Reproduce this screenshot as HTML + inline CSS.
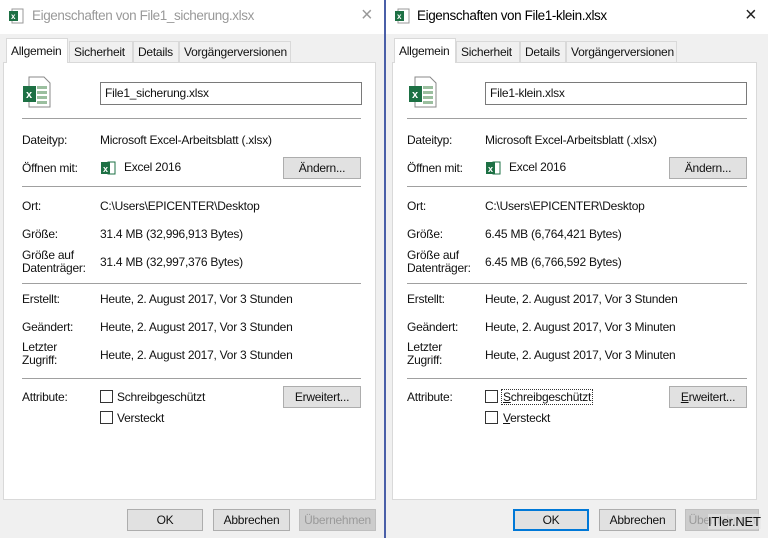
<!DOCTYPE html>
<html><head><meta charset="utf-8"><style>
*{margin:0;padding:0;box-sizing:border-box}
body{width:768px;height:538px;background:#f0f0f0;font-family:"Liberation Sans",sans-serif;font-size:12px;letter-spacing:-0.25px;color:#111;position:relative;overflow:hidden}
.w{position:absolute;top:0;height:538px;width:384px;background:#f0f0f0}
.a{position:absolute;white-space:nowrap}
.tb{position:absolute;left:0;top:0;width:100%;height:34px;background:#fff}
.panel{position:absolute;top:62px;height:438px;background:#fff;border:1px solid #d9d9d9}
.tab{position:absolute;top:41px;height:21px;border:1px solid #d9d9d9;border-bottom:none;background:#f0f0f0;padding:3px 4px 0;font-size:12px}
.tab.s{top:38px;height:25px;background:#fff;padding-top:5px;z-index:2}
.sep{position:absolute;height:1px;background:#a0a0a0}
.btn{position:absolute;height:22px;background:#e1e1e1;border:1px solid #adadad;text-align:center;line-height:20px}
.cb{position:absolute;width:13px;height:13px;border:1px solid #333;background:#fff}
.inp{position:absolute;height:23px;border:1px solid #7a7a7a;background:#fff;padding:3px 4px}
</style></head><body>

<div class="w" style="left:0">
<div class="tb"></div>
<svg class="a" style="left:8px;top:8px" width="16" height="16"><rect x="4" y="1" width="11" height="14" fill="#fff" stroke="#999"/><rect x="1" y="3" width="9" height="10" fill="#1d7044"/><text x="3" y="11" font-size="8" fill="#fff" font-family="Liberation Sans" font-weight="bold">x</text></svg>
<div class="a" style="left:32px;top:8px;font-size:13.5px;color:#999;letter-spacing:-0.4px">Eigenschaften von File1_sicherung.xlsx</div>
<div class="a" style="left:361px;top:4px;font-size:20px;color:#999">×</div>
<div class="panel" style="left:3px;width:373px"></div>
<div class="tab s" style="left:6px;width:62px">Allgemein</div>
<div class="tab" style="left:69px;width:64px">Sicherheit</div>
<div class="tab" style="left:133px;width:46px">Details</div>
<div class="tab" style="left:179px;width:112px">Vorgängerversionen</div>
<svg class="a" style="left:22px;top:76px" width="30" height="32"><path d="M7 1h15l6 6v24H7z" fill="#fff" stroke="#888"/><g fill="#9bbf9f"><rect x="15" y="10" width="10" height="3"/><rect x="15" y="15" width="10" height="3"/><rect x="15" y="20" width="10" height="3"/><rect x="15" y="25" width="10" height="3"/></g><rect x="1" y="10" width="13" height="16" fill="#1d7044"/><text x="4" y="22" font-size="11" fill="#fff" font-family="Liberation Sans" font-weight="bold">x</text></svg>
<div class="inp" style="left:100px;top:82px;width:262px">File1_sicherung.xlsx</div>
<div class="sep" style="left:22px;top:118px;width:339px"></div>
<div class="a" style="left:22px;top:133px">Dateityp:</div><div class="a" style="left:100px;top:133px">Microsoft Excel-Arbeitsblatt (.xlsx)</div>
<div class="a" style="left:22px;top:161px">Öffnen mit:</div>
<svg class="a" style="left:100px;top:160px" width="16" height="16"><rect x="8" y="2" width="7" height="12" fill="#fff" stroke="#1d7044"/><rect x="1" y="2" width="9" height="12" fill="#1d7044"/><text x="3" y="12" font-size="9" fill="#fff" font-weight="bold" font-family="Liberation Sans">x</text></svg>
<div class="a" style="left:124px;top:160px">Excel 2016</div>
<div class="btn" style="left:283px;top:157px;width:78px">Ändern...</div>
<div class="sep" style="left:22px;top:186px;width:339px"></div>
<div class="a" style="left:22px;top:199px">Ort:</div><div class="a" style="left:100px;top:199px">C:\Users\EPICENTER\Desktop</div>
<div class="a" style="left:22px;top:227px">Größe:</div><div class="a" style="left:100px;top:227px">31.4 MB (32,996,913 Bytes)</div>
<div class="a" style="left:22px;top:249px;line-height:13px">Größe auf<br>Datenträger:</div><div class="a" style="left:100px;top:255px">31.4 MB (32,997,376 Bytes)</div>
<div class="sep" style="left:22px;top:283px;width:339px"></div>
<div class="a" style="left:22px;top:292px">Erstellt:</div><div class="a" style="left:100px;top:292px">Heute, 2. August 2017, Vor 3 Stunden</div>
<div class="a" style="left:22px;top:320px">Geändert:</div><div class="a" style="left:100px;top:320px">Heute, 2. August 2017, Vor 3 Stunden</div>
<div class="a" style="left:22px;top:341px;line-height:13px">Letzter<br>Zugriff:</div><div class="a" style="left:100px;top:348px">Heute, 2. August 2017, Vor 3 Stunden</div>
<div class="sep" style="left:22px;top:378px;width:339px"></div>
<div class="a" style="left:22px;top:390px">Attribute:</div>
<div class="cb" style="left:100px;top:390px"></div><div class="a" style="left:117px;top:390px">Schreibgeschützt</div>
<div class="cb" style="left:100px;top:411px"></div><div class="a" style="left:117px;top:411px">Versteckt</div>
<div class="btn" style="left:283px;top:386px;width:78px">Erweitert...</div>
<div class="btn" style="left:127px;top:509px;width:76px">OK</div>
<div class="btn" style="left:213px;top:509px;width:77px">Abbrechen</div>
<div class="btn" style="left:299px;top:509px;width:77px;color:#9a9a9a;background:#ccc;border-color:#bfbfbf">Übernehmen</div>
</div>

<div class="a" style="left:384px;top:0;width:2px;height:538px;background:#4a5fa8"></div>

<div class="w" style="left:386px;width:382px">
<div class="tb"></div>
<svg class="a" style="left:8px;top:8px" width="16" height="16"><rect x="4" y="1" width="11" height="14" fill="#fff" stroke="#999"/><rect x="1" y="3" width="9" height="10" fill="#1d7044"/><text x="3" y="11" font-size="8" fill="#fff" font-family="Liberation Sans" font-weight="bold">x</text></svg>
<div class="a" style="left:31px;top:8px;font-size:13.5px;color:#000;letter-spacing:-0.4px">Eigenschaften von File1-klein.xlsx</div>
<div class="a" style="left:359px;top:4px;font-size:20px;color:#222">×</div>
<div class="panel" style="left:6px;width:365px"></div>
<div class="tab s" style="left:8px;width:62px">Allgemein</div>
<div class="tab" style="left:70px;width:64px">Sicherheit</div>
<div class="tab" style="left:134px;width:46px">Details</div>
<div class="tab" style="left:180px;width:111px">Vorgängerversionen</div>
<svg class="a" style="left:22px;top:76px" width="30" height="32"><path d="M7 1h15l6 6v24H7z" fill="#fff" stroke="#888"/><g fill="#9bbf9f"><rect x="15" y="10" width="10" height="3"/><rect x="15" y="15" width="10" height="3"/><rect x="15" y="20" width="10" height="3"/><rect x="15" y="25" width="10" height="3"/></g><rect x="1" y="10" width="13" height="16" fill="#1d7044"/><text x="4" y="22" font-size="11" fill="#fff" font-family="Liberation Sans" font-weight="bold">x</text></svg>
<div class="inp" style="left:99px;top:82px;width:262px">File1-klein.xlsx</div>
<div class="sep" style="left:21px;top:118px;width:340px"></div>
<div class="a" style="left:21px;top:133px">Dateityp:</div><div class="a" style="left:99px;top:133px">Microsoft Excel-Arbeitsblatt (.xlsx)</div>
<div class="a" style="left:21px;top:161px">Öffnen mit:</div>
<svg class="a" style="left:99px;top:160px" width="16" height="16"><rect x="8" y="2" width="7" height="12" fill="#fff" stroke="#1d7044"/><rect x="1" y="2" width="9" height="12" fill="#1d7044"/><text x="3" y="12" font-size="9" fill="#fff" font-weight="bold" font-family="Liberation Sans">x</text></svg>
<div class="a" style="left:123px;top:160px">Excel 2016</div>
<div class="btn" style="left:283px;top:157px;width:78px">Ändern...</div>
<div class="sep" style="left:21px;top:186px;width:340px"></div>
<div class="a" style="left:21px;top:199px">Ort:</div><div class="a" style="left:99px;top:199px">C:\Users\EPICENTER\Desktop</div>
<div class="a" style="left:21px;top:227px">Größe:</div><div class="a" style="left:99px;top:227px">6.45 MB (6,764,421 Bytes)</div>
<div class="a" style="left:21px;top:249px;line-height:13px">Größe auf<br>Datenträger:</div><div class="a" style="left:99px;top:255px">6.45 MB (6,766,592 Bytes)</div>
<div class="sep" style="left:21px;top:283px;width:340px"></div>
<div class="a" style="left:21px;top:292px">Erstellt:</div><div class="a" style="left:99px;top:292px">Heute, 2. August 2017, Vor 3 Stunden</div>
<div class="a" style="left:21px;top:320px">Geändert:</div><div class="a" style="left:99px;top:320px">Heute, 2. August 2017, Vor 3 Minuten</div>
<div class="a" style="left:21px;top:341px;line-height:13px">Letzter<br>Zugriff:</div><div class="a" style="left:99px;top:348px">Heute, 2. August 2017, Vor 3 Minuten</div>
<div class="sep" style="left:21px;top:378px;width:340px"></div>
<div class="a" style="left:21px;top:390px">Attribute:</div>
<div class="cb" style="left:99px;top:390px"></div><div class="a" style="left:115px;top:389px;border:1px dotted #333;padding:0 1px"><u>S</u>chreibgeschützt</div>
<div class="cb" style="left:99px;top:411px"></div><div class="a" style="left:117px;top:411px"><u>V</u>ersteckt</div>
<div class="btn" style="left:283px;top:386px;width:78px"><u>E</u>rweitert...</div>
<div class="btn" style="left:127px;top:509px;width:76px;border:2px solid #0078d7;line-height:18px">OK</div>
<div class="btn" style="left:213px;top:509px;width:77px">Abbrechen</div>
<div class="btn" style="left:299px;top:509px;width:74px;color:#9a9a9a;background:#ccc;border-color:#bfbfbf">Übernehmen</div>
<div class="a" style="left:322px;top:514px;font-size:13px;color:#111;background:rgba(230,230,230,.6)">ITler.NET</div>
</div>
</body></html>
